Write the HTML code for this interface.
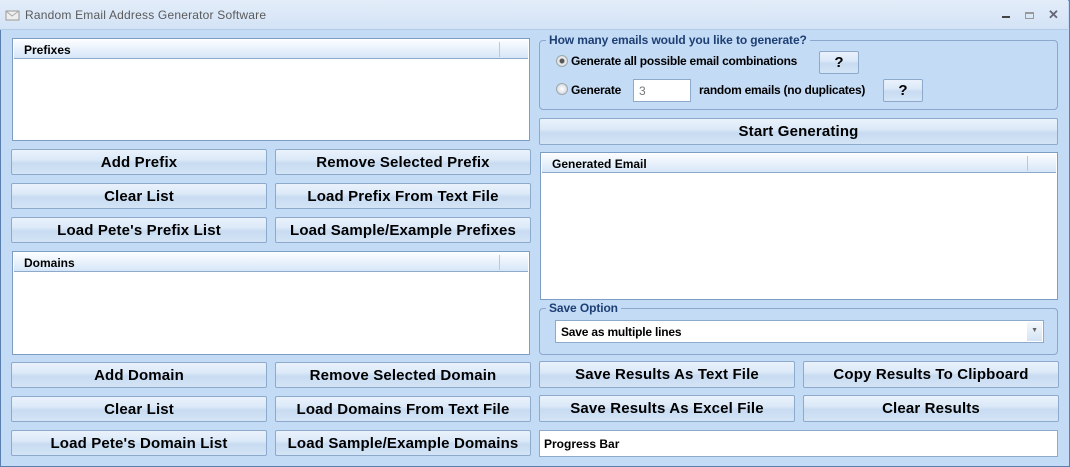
<!DOCTYPE html>
<html><head><meta charset="utf-8"><style>
*{box-sizing:border-box;margin:0;padding:0}
body{width:1070px;height:467px;overflow:hidden;font-family:"Liberation Sans",Arial,sans-serif;background:#c4dbf6;position:relative}
.win{position:absolute;left:0;top:0;width:1070px;height:467px;border:1px solid #5a7fae;border-top-color:#6a8fbf;background:#c4dbf6}
.title{position:absolute;left:0;top:0;width:1068px;height:30px;background:linear-gradient(#e3edf9,#d3e3f6);border-bottom:1px solid #b4cbe8}
.title span{position:absolute;left:25px;top:8px;font-size:12px;color:#5a5a5a;letter-spacing:0.2px}
.ab{position:absolute}
.btn{position:absolute;border:1px solid #8eaacb;border-radius:2px;background:linear-gradient(#eaf2fc 0%,#dce9f8 40%,#c8dbf1 55%,#d3e4f6 100%);font-weight:bold;font-size:15px;letter-spacing:0.15px;color:#000;text-align:center;display:flex;align-items:center;justify-content:center}
.list{position:absolute;background:#fff;border:1px solid #7e9dc4}
.hdr{position:absolute;left:1px;right:1px;top:1px;height:19px;background:linear-gradient(#fbfdff,#d6e6f8);border-bottom:1px solid #8eaacb;font-size:12px;font-weight:bold;padding:3px 0 0 10px}
.hdr i{position:absolute;right:28px;top:2px;width:1px;height:15px;background:#b5c9e3}
.grp{position:absolute;border:1px solid #8aa7cc;border-radius:4px}
.grp b{position:absolute;top:-8px;background:#c4dbf6;padding:0 3px;font-size:12px;color:#1d3f73;letter-spacing:-0.1px}
.t{position:absolute;font-size:12px;font-weight:bold;color:#000;letter-spacing:-0.25px}
.radio{position:absolute;width:12px;height:12px;border-radius:50%;border:1px solid #9aa;background:radial-gradient(#fff,#ccd)}
</style></head><body>
<div class="win"></div>
<div class="title"><span>Random Email Address Generator Software</span>
<svg class="ab" style="left:5px;top:8px" width="16" height="14"><rect x="1" y="3" width="13" height="9" fill="#eee" stroke="#999"/><path d="M1 3 L7 8 L14 3" fill="none" stroke="#aaa"/></svg>
<div class="ab" style="left:1002px;top:16px;width:8px;height:2px;background:#444"></div>
<div class="ab" style="left:1025px;top:12px;width:9px;height:7px;border:1px solid #999;border-top:2px solid #999"></div>
<div class="ab" style="left:1048px;top:7px;font-size:13px;font-weight:bold;color:#667">✕</div>
</div>

<div class="list" style="left:12px;top:38px;width:518px;height:103px"><div class="hdr">Prefixes<i></i></div></div>
<div class="btn" style="left:11px;top:149px;width:256px;height:26px">Add Prefix</div>
<div class="btn" style="left:275px;top:149px;width:256px;height:26px">Remove Selected Prefix</div>
<div class="btn" style="left:11px;top:183px;width:256px;height:26px">Clear List</div>
<div class="btn" style="left:275px;top:183px;width:256px;height:26px">Load Prefix From Text File</div>
<div class="btn" style="left:11px;top:217px;width:256px;height:26px">Load Pete's Prefix List</div>
<div class="btn" style="left:275px;top:217px;width:256px;height:26px">Load Sample/Example Prefixes</div>

<div class="list" style="left:12px;top:251px;width:518px;height:104px"><div class="hdr">Domains<i></i></div></div>
<div class="btn" style="left:11px;top:362px;width:256px;height:26px">Add Domain</div>
<div class="btn" style="left:275px;top:362px;width:256px;height:26px">Remove Selected Domain</div>
<div class="btn" style="left:11px;top:396px;width:256px;height:26px">Clear List</div>
<div class="btn" style="left:275px;top:396px;width:256px;height:26px">Load Domains From Text File</div>
<div class="btn" style="left:11px;top:430px;width:256px;height:26px">Load Pete's Domain List</div>
<div class="btn" style="left:275px;top:430px;width:256px;height:26px">Load Sample/Example Domains</div>

<div class="grp" style="left:539px;top:40px;width:519px;height:70px"><b style="left:6px">How many emails would you like to generate?</b></div>
<div class="radio" style="left:556px;top:55px;background:radial-gradient(#555 0,#555 2px,#eee 3px,#ccd)"></div>
<div class="t" style="left:571px;top:54px">Generate all possible email combinations</div>
<div class="btn" style="left:819px;top:51px;width:40px;height:23px">?</div>
<div class="radio" style="left:556px;top:83px"></div>
<div class="t" style="left:571px;top:83px">Generate</div>
<div class="ab" style="left:633px;top:79px;width:58px;height:23px;background:#fff;border:1px solid #8eaacb;font-size:12px;color:#777;padding:4px 0 0 5px">3</div>
<div class="t" style="left:699px;top:83px">random emails (no duplicates)</div>
<div class="btn" style="left:883px;top:79px;width:40px;height:23px">?</div>

<div class="btn" style="left:539px;top:118px;width:519px;height:27px">Start Generating</div>
<div class="list" style="left:540px;top:152px;width:518px;height:148px"><div class="hdr">Generated Email<i></i></div></div>

<div class="grp" style="left:539px;top:308px;width:519px;height:47px"><b style="left:6px">Save Option</b></div>
<div class="ab" style="left:555px;top:320px;width:489px;height:23px;background:#fff;border:1px solid #8eaacb;font-size:12px;font-weight:bold;padding:4px 0 0 5px;letter-spacing:-0.2px">Save as multiple lines
<div class="ab" style="right:1px;top:1px;width:15px;height:19px;background:linear-gradient(#f4f8fd,#d4e3f4);font-size:7px;color:#666;text-align:center;padding-top:5px">▼</div></div>

<div class="btn" style="left:539px;top:361px;width:256px;height:27px">Save Results As Text File</div>
<div class="btn" style="left:803px;top:361px;width:256px;height:27px">Copy Results To Clipboard</div>
<div class="btn" style="left:539px;top:395px;width:256px;height:27px">Save Results As Excel File</div>
<div class="btn" style="left:803px;top:395px;width:256px;height:27px">Clear Results</div>
<div class="ab" style="left:539px;top:430px;width:519px;height:27px;background:#fff;border:1px solid #8eaacb;font-size:12px;font-weight:bold;padding:6px 0 0 4px">Progress Bar</div>
</body></html>
